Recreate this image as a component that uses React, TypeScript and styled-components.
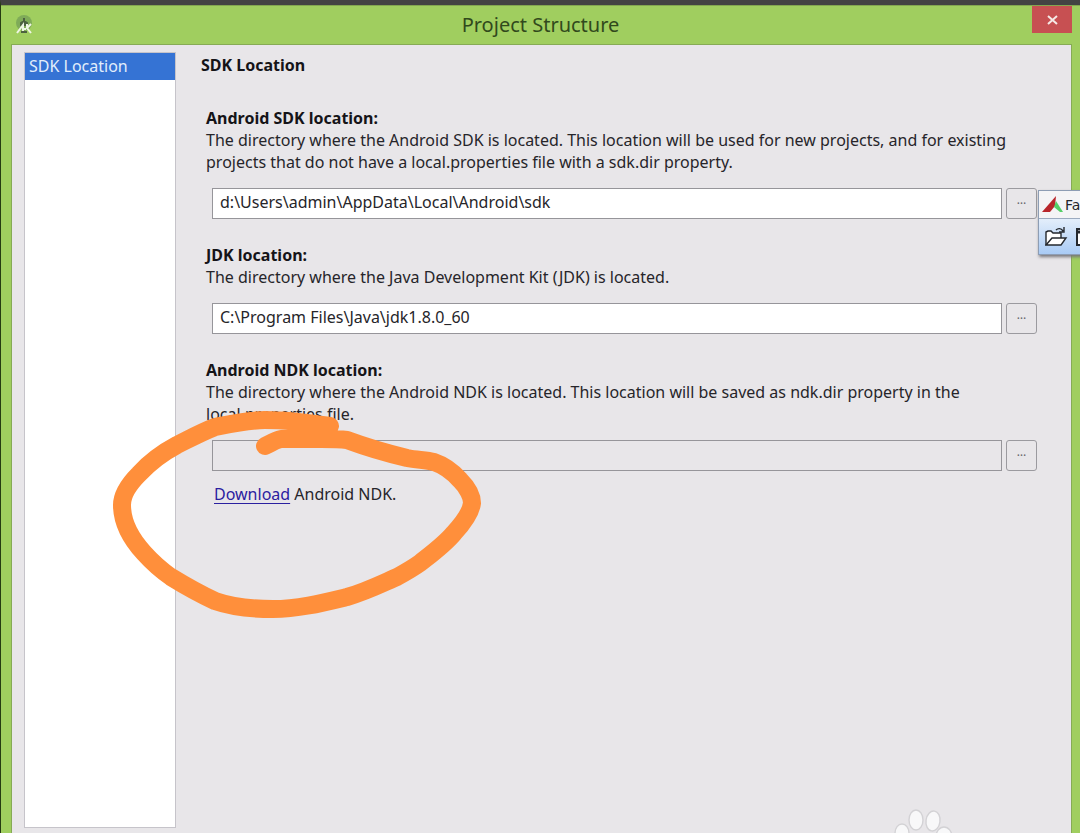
import React from "react";
import styled, { createGlobalStyle } from "styled-components";

const GlobalStyle = createGlobalStyle`
  *, *::before, *::after { box-sizing: border-box; }
  body {
    margin: 0;
    background: #a0ce5f;
    color: #26252a;
    font-family: "Noto Sans", "Open Sans", sans-serif;
    font-size: 16px;
    line-height: 22px;
  }
`;

const Window = styled.div`
  position: relative;
  display: flex;
  flex-direction: column;
  min-height: 100vh;
  overflow: hidden;
  background: #a0ce5f;
  border-top: 5px solid #434343;
  border-left: 1px solid #263b12;
`;

const TitleBar = styled.header`
  display: grid;
  grid-template-columns: 1fr auto 1fr;
  height: 39px;
  padding: 0 8px;
  border-top: 1px solid #83a650;
`;

const AppIcon = styled.svg`
  width: 20px;
  height: 20px;
  margin: 8px 0 0 6px;
`;

const WindowTitle = styled.h1`
  margin: 0;
  font-size: 20px;
  font-weight: 400;
  line-height: 38px;
  color: #31491c;
`;

const CloseButton = styled.button`
  display: grid;
  place-items: center;
  justify-self: end;
  width: 40px;
  height: 27px;
  padding: 0;
  border: 0;
  background: #c75052;
  color: #f5e9e6;
`;

const Dialog = styled.main`
  display: flex;
  flex: 1;
  gap: 25px;
  margin: 0 8px 0 10px;
  padding: 7px 34px 5px 12px;
  border: 1px solid #86ab55;
  border-bottom: 0;
  background: #e8e6e9;
`;

const Sidebar = styled.nav`
  flex: 0 0 152px;
  border: 1px solid #c6c4ca;
  background: #fff;
`;

const SidebarLink = styled.a`
  display: block;
  padding: 2px 4px 3px;
  background: #3573d4;
  color: #e2eefb;
  text-decoration: none;
`;

const Panel = styled.section`
  flex: 1;
  min-width: 0;
`;

const PanelTitle = styled.h2`
  margin: 2px 0 31px;
  font-size: 16px;
  font-weight: 700;
  color: #151418;
`;

const Form = styled.form`
  display: flex;
  flex-direction: column;
  gap: 25px;
  padding-left: 5px;
`;

const FieldLabel = styled.label`
  display: block;
  font-weight: 700;
  color: #151418;
`;

const Description = styled.p`
  max-width: 820px;
  margin: 0;
`;

const PathRow = styled.div`
  display: flex;
  gap: 4px;
  margin: 15px 0 0 6px;
`;

const PathInput = styled.input<{ $empty: boolean }>`
  flex: 1;
  min-width: 0;
  height: 31px;
  padding: 0 7px 3px;
  border: 1px solid #96959a;
  border-radius: 0;
  background: ${(p) => (p.$empty ? "transparent" : "#fff")};
  color: inherit;
  font: inherit;
`;

const BrowseButton = styled.button`
  width: 31px;
  height: 31px;
  padding: 0 0 7px;
  border: 1px solid #9b9a9f;
  border-radius: 3px;
  background: transparent;
  color: #66656a;
  font: inherit;
  font-size: 12px;
`;

const Hint = styled.p`
  margin: 12px 0 0 8px;
`;

const HintLink = styled.a`
  color: #2b20a0;
  text-underline-offset: 3px;
`;

const InputToolbar = styled.aside`
  position: absolute;
  top: 185px;
  right: -60px;
  width: 102px;
  border: 1px solid #8d9db4;
  background: #f4f4f6;
  box-shadow: 1px 2px 3px #77767b;
`;

const ToolbarCaption = styled.div`
  display: flex;
  align-items: center;
  gap: 2px;
  height: 27px;
  padding-left: 3px;
  font-family: "DejaVu Sans", sans-serif;
  font-size: 14px;
  white-space: nowrap;
`;

const ToolbarIcons = styled.div`
  display: flex;
  align-items: center;
  gap: 8px;
  height: 36px;
  padding-left: 6px;
  border-top: 1px solid #9cabc0;
  background: linear-gradient(#e3eefb, #a9cbf5);
`;

const Paw = styled.svg`
  position: absolute;
  right: 126px;
  bottom: 0;
  width: 64px;
  height: 26px;
`;

const Scribble = styled.svg`
  position: absolute;
  top: 385px;
  left: 99px;
  width: 400px;
  height: 240px;
  pointer-events: none;
`;

type Location = {
  id: string;
  label: string;
  description: string;
  path: string;
  download?: string;
};

const locations: Location[] = [
  {
    id: "sdk",
    label: "Android SDK location:",
    description:
      "The directory where the Android SDK is located. This location will be used for new projects, and for existing projects that do not have a local.properties file with a sdk.dir property.",
    path: "d:\\Users\\admin\\AppData\\Local\\Android\\sdk",
  },
  {
    id: "jdk",
    label: "JDK location:",
    description: "The directory where the Java Development Kit (JDK) is located.",
    path: "C:\\Program Files\\Java\\jdk1.8.0_60",
  },
  {
    id: "ndk",
    label: "Android NDK location:",
    description:
      "The directory where the Android NDK is located. This location will be saved as ndk.dir property in the local.properties file.",
    path: "",
    download: "Android NDK.",
  },
];

function LocationField({ id, label, description, path, download }: Location) {
  return (
    <div>
      <FieldLabel htmlFor={id}>{label}</FieldLabel>
      <Description>{description}</Description>
      <PathRow>
        <PathInput id={id} type="text" defaultValue={path} $empty={!path} spellCheck={false} />
        <BrowseButton type="button" aria-label={"Browse, " + label}>…</BrowseButton>
      </PathRow>
      {download && (
        <Hint>
          <HintLink href="#download">Download</HintLink> {download}
        </Hint>
      )}
    </div>
  );
}

export default function App() {
  return (
    <>
      <GlobalStyle />
      <Window>
        <TitleBar>
          <AppIcon viewBox="0 0 20 20" aria-hidden="true">
            <circle cx="9" cy="9" r="8" fill="#7fab58" />
            <path d="M9 4v3M6 9l3-2 3 2v2H6z" fill="#4c6140" stroke="#4c6140" strokeWidth="2" />
            <path d="M2 19l6-8v6M7 15h4M16 10l-4 4 4 5M12 10v4" fill="none" stroke="#eef5e4" strokeWidth="2" />
            <path d="M6 18h6" stroke="#4c6140" strokeWidth="2" />
          </AppIcon>
          <WindowTitle>Project Structure</WindowTitle>
          <CloseButton type="button" aria-label="Close">
            <svg width="11" height="10" viewBox="0 0 11 10" aria-hidden="true">
              <path d="M1 1l9 8M10 1L1 9" stroke="currentColor" strokeWidth="2" />
            </svg>
          </CloseButton>
        </TitleBar>
        <Dialog>
          <Sidebar>
            <SidebarLink href="#sdk-location" aria-current="page">SDK Location</SidebarLink>
          </Sidebar>
          <Panel>
            <PanelTitle>SDK Location</PanelTitle>
            <Form>
              {locations.map((location) => (
                <LocationField key={location.id} {...location} />
              ))}
            </Form>
          </Panel>
        </Dialog>

        <InputToolbar>
          <ToolbarCaption>
            <svg width="21" height="18" viewBox="0 0 21 18" aria-hidden="true">
              <path d="M14 0l-1 10-5 6H0z" fill="#b8262b" />
              <path d="M14 5l7 11h-3l-6-5z" fill="#55cf68" />
            </svg>
            Fa
          </ToolbarCaption>
          <ToolbarIcons>
            <svg width="23" height="20" viewBox="0 0 23 20" fill="none" stroke="#24282e" aria-hidden="true">
              <path d="M1 18V5l2-1h3l2 2h8v5" fill="#fff" strokeWidth="1.4" />
              <path d="M1 18l6-7h14l-5 7z" fill="#fff" strokeWidth="1.4" />
              <path d="M11 3c2-2 5-2 7 1M19 0v5h-5" strokeWidth="1.4" />
            </svg>
            <svg width="20" height="20" viewBox="0 0 20 20" fill="none" stroke="#24282e" aria-hidden="true">
              <path d="M1 2h17v16H1z" fill="#fff" strokeWidth="2" />
              <path d="M1 5h17" strokeWidth="3" />
            </svg>
          </ToolbarIcons>
        </InputToolbar>

        <Paw viewBox="0 0 64 26" aria-hidden="true">
          <g fill="#f8f8f9" stroke="#d3d2d5" strokeWidth="1.4">
            <ellipse cx="26" cy="13" rx="7" ry="10" />
            <ellipse cx="43" cy="14" rx="7" ry="10" transform="rotate(8 43 14)" />
            <ellipse cx="12" cy="26" rx="7" ry="9" />
            <ellipse cx="54" cy="30" rx="8" ry="10" />
          </g>
        </Paw>

        <Scribble viewBox="0 0 400 240" aria-hidden="true">
          <path
            d="M230 36C210 33 185 30 165 30C148 30 130 34 115 37C102 42 91 48 77 55C62 63 49 73 39 84C28 95 22 105 22 115C22 135 33 151 44 163C53 173 61 180 71 187C84 195 100 204 115 211C132 217 152 219 173 219C198 219 222 213 247 207C265 202 281 194 297 187C306 182 313 178 320 173C334 162 345 154 354 143C365 131 371 122 372 113C372 107 368 98 360 90C352 81 343 75 334 72C326 70 317 70 307 68C286 63 266 57 247 50C239 49 231 49 221 49H181C176 50 171 53 165 56"
            fill="none"
            stroke="#ff8f3b"
            strokeWidth="18"
            strokeLinecap="round"
            strokeLinejoin="round"
          />
        </Scribble>
      </Window>
    </>
  );
}
